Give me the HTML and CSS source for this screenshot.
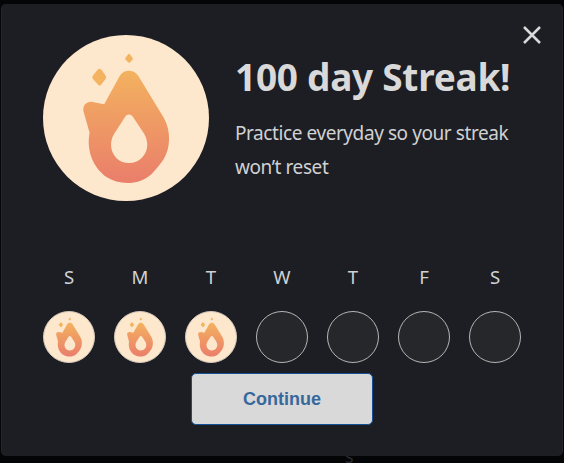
FILE: index.html
```html
<!DOCTYPE html>
<html lang="en">
<head>
<meta charset="utf-8">
<title>Streak</title>
<link rel="stylesheet" href="styles.css">
</head>
<body>
<svg class="defs" aria-hidden="true">
  <defs>
    <linearGradient id="fire" gradientUnits="userSpaceOnUse" x1="0" y1="136" x2="0" y2="473">
      <stop offset="0" stop-color="#f3b25f"/>
      <stop offset="1" stop-color="#ea7e6b"/>
    </linearGradient>
    <symbol id="flame" viewBox="38 29 500 500">
      <path fill="url(#fire)" fill-rule="evenodd" d="M222 237L268 153C281 131 311 131 325 153L400 276C424 317 421 370 400 403C390 418 377 433 363 448C325 482 266 480 229 456C193 432 167 381 178 323L160 260C156 241 168 228 187 230ZM284 276C289 265 303 265 309 276L342 326C357 353 353 379 336 397C316 418 281 420 259 399C240 380 237 350 252 326Z"/>
      <path fill="#f4b45f" d="M203 133Q208 128 213 133L226 151Q230 156 226 161L212 179Q208 183 203 178L188 161Q184 156 188 151ZM294 87Q296 84 299 87L307 97Q309 100 307 103L299 112Q296 114 294 111L286 103Q284 100 286 97Z"/>
    </symbol>
  </defs>
</svg>
<main class="modal">
  <button class="close" aria-label="Close">
    <svg viewBox="0 0 18 18"><path d="M1 1L17 17M17 1L1 17"/></svg>
  </button>
  <header class="intro">
    <svg class="badge"><use href="#flame"/></svg>
    <div class="copy">
      <h1>100 day Streak!</h1>
      <p>Practice everyday so your streak won’t reset</p>
    </div>
  </header>
  <section class="week">
    <div class="day"><span>S</span><i class="dot done"><svg><use href="#flame"/></svg></i></div>
    <div class="day"><span>M</span><i class="dot done"><svg><use href="#flame"/></svg></i></div>
    <div class="day"><span>T</span><i class="dot done"><svg><use href="#flame"/></svg></i></div>
    <div class="day"><span>W</span><i class="dot"></i></div>
    <div class="day"><span>T</span><i class="dot"></i></div>
    <div class="day"><span>F</span><i class="dot"></i></div>
    <div class="day"><span>S</span><i class="dot"></i></div>
  </section>
  <button class="continue">Continue</button>
</main>
<div class="behind">s</div>
</body>
</html>
```
FILE: styles.css
```css
* { box-sizing: border-box; }
body {
  margin: 0;
  height: 463px;
  padding: 4px 1px 0;
  overflow: hidden;
  background: #040506;
  color: #d0d1d3;
  font-family: "Noto Sans", sans-serif;
}
svg { display: block; }
.defs { position: absolute; width: 0; height: 0; }
.modal {
  position: relative;
  height: 452px;
  padding: 31px 41px 0;
  border-radius: 5px;
  border: 1px solid #24262a;
  border-width: 0 1px;
  background: #1d1e23;
}
.close {
  position: absolute;
  top: 22px;
  right: 21.5px;
  width: 18px;
  height: 18px;
  padding: 0;
  border: 0;
  background: none;
}
.close path { stroke: #d9d9d9; stroke-width: 2.5; fill: none; }
.intro { display: flex; gap: 25.6px; height: 167px; }
.badge {
  flex: none;
  width: 166.4px;
  height: 166.4px;
  border-radius: 50%;
  background: #fde7cd;
}
.copy { padding-top: 17px; white-space: nowrap; }
h1 {
  margin: 0;
  color: #d9d9d9;
  font-size: 37px;
  line-height: 50px;
  font-weight: 700;
  letter-spacing: -0.27px;
}
p {
  width: 285px;
  margin: 14px 0 0;
  white-space: normal;
  font-size: 19px;
  line-height: 34px;
  letter-spacing: -0.42px;
}
.week {
  display: flex;
  gap: 19px;
  margin-top: 62px;
}
.day { width: 52px; text-align: center; }
.day span {
  display: block;
  height: 47px;
  font-size: 18.6px;
  line-height: 26px;
}
.dot {
  display: block;
  width: 52px;
  height: 52px;
  border: 1px solid #b5b5b6;
  border-radius: 50%;
  background: #26272b;
}
.done { background: #fde7cd; border-color: #d5c8bb; }
.done svg { width: 50px; height: 50px; }
.continue {
  display: block;
  width: 182px;
  height: 52px;
  margin: 10px auto 0;
  border: 1px solid #135196;
  border-radius: 5px;
  background: #d9d9d9;
  color: #37689c;
  font: 700 18px "Liberation Sans", sans-serif;
}
.behind {
  height: 7px;
  padding-left: 344px;
  overflow: hidden;
  color: #2a2c30;
  font-size: 18px;
  line-height: 0;
}
```
